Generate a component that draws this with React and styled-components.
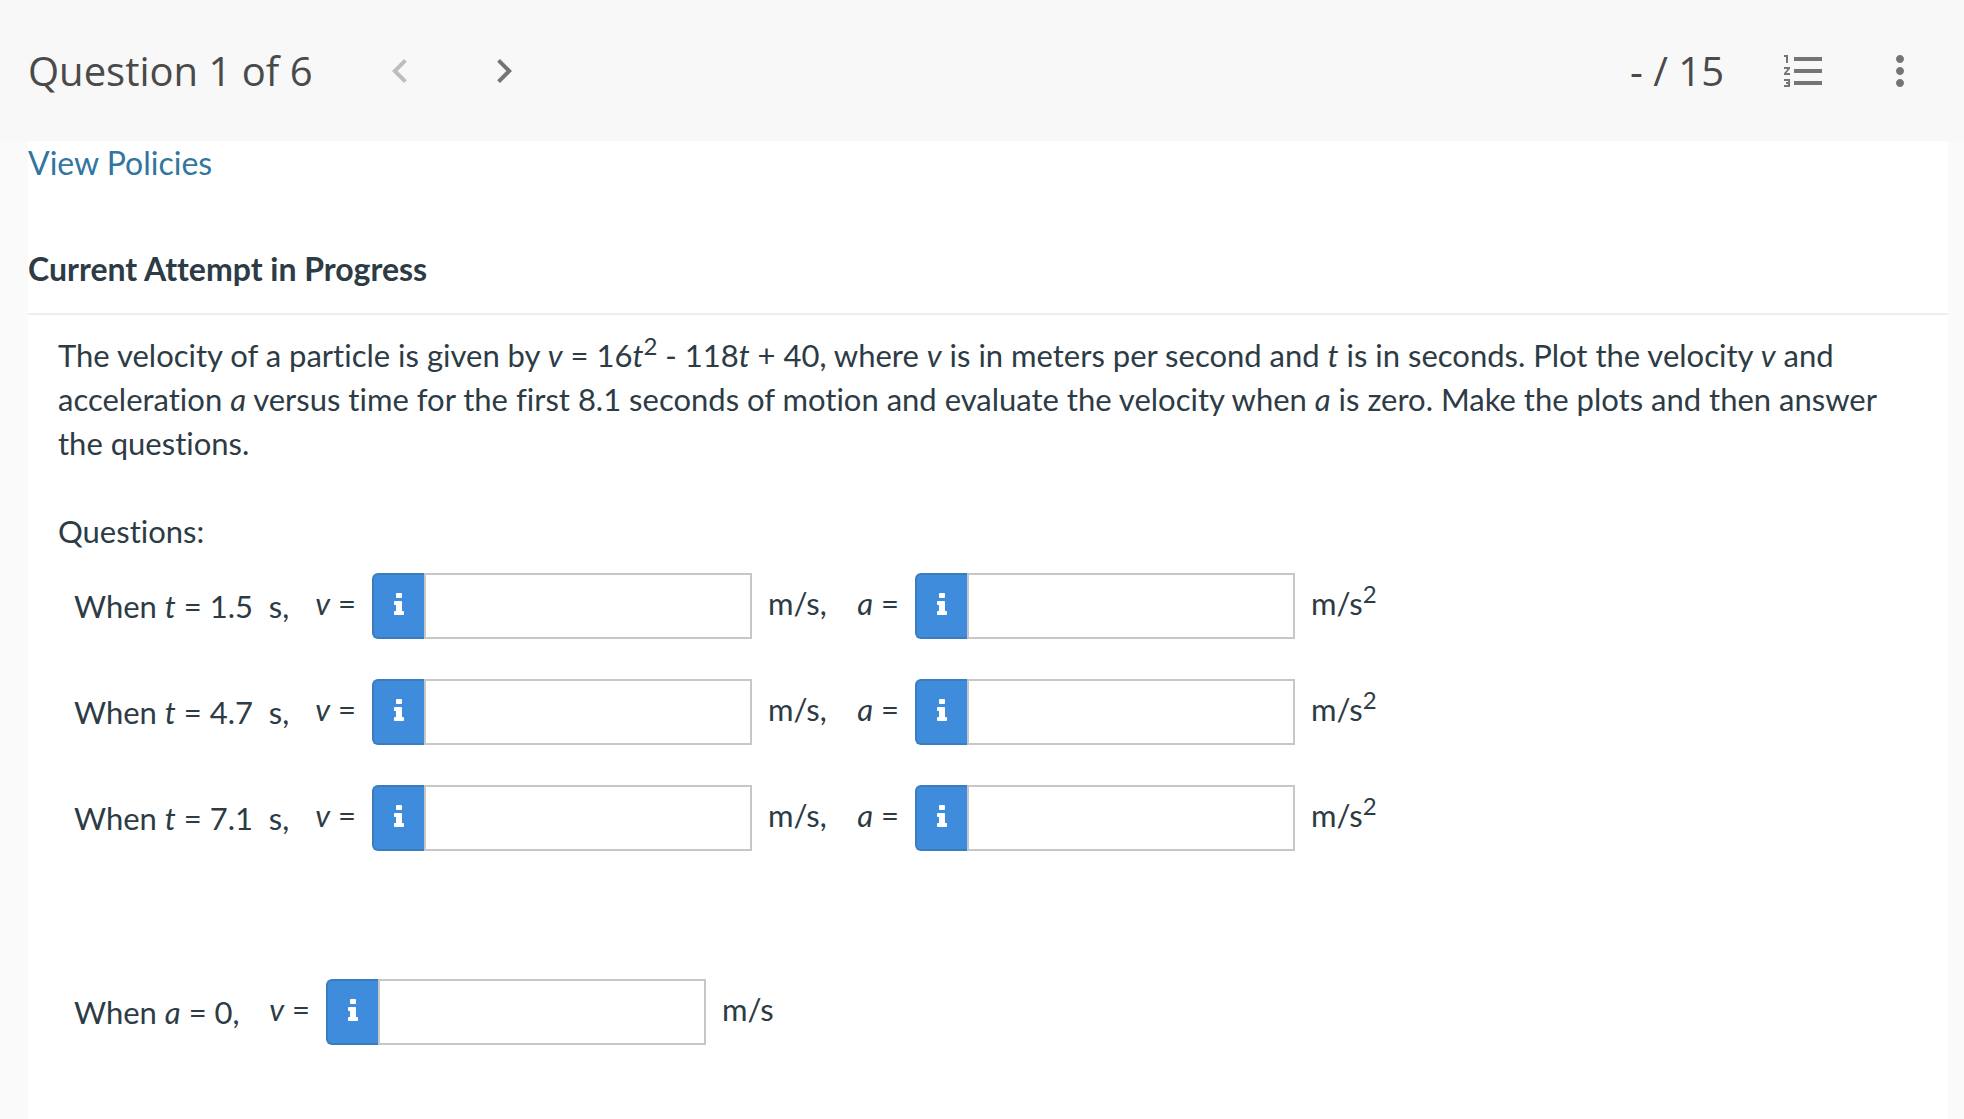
import React, { useState } from "react";
import styled, { createGlobalStyle } from "styled-components";

const GlobalStyle = createGlobalStyle`
  * {
    box-sizing: border-box;
  }
  body {
    margin: 0;
    background-color: #fafafa;
    color: #2d3b45;
    font-family: Lato, "Liberation Sans", sans-serif;
    font-size: 32px;
    line-height: 44px;
    font-variant-ligatures: no-common-ligatures;
  }
`;

const questions = [
  { id: "q1", time: "1.5" },
  { id: "q2", time: "4.7" },
  { id: "q3", time: "7.1" },
];

const Icon = ({ path }) => (
  <svg width="48" height="48" viewBox="0 0 24 24" fill="currentColor">
    <path d={path} />
  </svg>
);

const AnswerField = ({ id, symbol, unit }) => {
  const [value, setValue] = useState("");
  return (
    <Answer>
      <FieldLabel htmlFor={id}>
        <i>{symbol}</i> =
      </FieldLabel>
      <InputGroup>
        <InfoButton type="button" aria-label="Answer information">
          <svg width="10" height="28" viewBox="0 0 640 1792" fill="currentColor">
            <path d="M640 1344v128q0 26-19 45t-45 19h-512q-26 0-45-19t-19-45v-128q0-26 19-45t45-19h64v-384h-64q-26 0-45-19t-19-45v-128q0-26 19-45t45-19h384q26 0 45 19t19 45v576h64q26 0 45 19t19 45zm-128-1152v192q0 26-19 45t-45 19h-256q-26 0-45-19t-19-45v-192q0-26 19-45t45-19h256q26 0 45 19t19 45z" />
          </svg>
        </InfoButton>
        <Input id={id} value={value} onChange={(e) => setValue(e.target.value)} />
      </InputGroup>
      <Unit>{unit}</Unit>
    </Answer>
  );
};

const App = () => {
  return (
    <>
      <GlobalStyle />
      <Header>
        <Title>Question 1 of 6</Title>
        <Nav>
          <IconButton type="button" aria-label="Previous question" disabled>
            <Icon path="M15.41 7.41L14 6l-6 6 6 6 1.41-1.41L10.83 12z" />
          </IconButton>
          <IconButton type="button" aria-label="Next question">
            <Icon path="M10 6L8.59 7.41 13.17 12l-4.58 4.59L10 18l6-6z" />
          </IconButton>
        </Nav>
        <Score>- / 15</Score>
        <IconButton type="button" aria-label="Question list">
          <Icon path="M2 17h2v.5H3v1h1v.5H2v1h3v-4H2v1zm1-9h1V4H2v1h1v3zm-1 3h1.8L2 13.1v.9h3v-1H3.2L5 10.9V10H2v1zm5-6v2h14V5H7zm0 14h14v-2H7v2zm0-6h14v-2H7v2z" />
        </IconButton>
        <IconButton type="button" aria-label="More options">
          <Icon path="M12 8c1.1 0 2-.9 2-2s-.9-2-2-2-2 .9-2 2 .9 2 2 2zm0 2c-1.1 0-2 .9-2 2s.9 2 2 2 2-.9 2-2-.9-2-2-2zm0 6c-1.1 0-2 .9-2 2s.9 2 2 2 2-.9 2-2-.9-2-2-2z" />
        </IconButton>
      </Header>
      <Panel>
        <PolicyLink href="#policies">View Policies</PolicyLink>
        <Attempt>Current Attempt in Progress</Attempt>
        <Content>
          <Paragraph>
            The velocity of a particle is given by <i>v</i> = 16<i>t</i>
            <Sup>2</Sup> - 118<i>t</i> + 40, where <i>v</i> is in meters per
            second and <i>t</i> is in seconds. Plot the velocity <i>v</i> and
            acceleration <i>a</i> versus time for the first 8.1 seconds of
            motion and evaluate the velocity when <i>a</i> is zero. Make the
            plots and then answer the questions.
          </Paragraph>
          <Paragraph>Questions:</Paragraph>
          <Questions>
            {questions.map(({ id, time }) => (
              <Row key={id}>
                <Condition $width={240}>
                  When <i>t</i> = {time}&nbsp; s,
                </Condition>
                <AnswerField id={`${id}-v`} symbol="v" unit="m/s," />
                <AnswerField
                  id={`${id}-a`}
                  symbol="a"
                  unit={
                    <>
                      m/s<Sup>2</Sup>
                    </>
                  }
                />
              </Row>
            ))}
          </Questions>
          <Row>
            <Condition $width={194}>
              When <i>a</i> = 0,
            </Condition>
            <AnswerField id="q4-v" symbol="v" unit="m/s" />
          </Row>
        </Content>
      </Panel>
    </>
  );
};

const Header = styled.header`
  display: flex;
  align-items: center;
  height: 141px;
  padding: 0 16px 0 28px;
  background-color: #f8f8f8;
  color: #4a4a4a;
  font-family: "Open Sans", "Noto Sans", sans-serif;
  font-size: 40px;
`;
const Title = styled.h1`
  margin: 0;
  font-size: 40px;
  font-weight: 400;
`;
const Nav = styled.nav`
  display: flex;
  gap: 8px;
  margin-left: 39px;
`;
const Score = styled.div`
  margin-left: auto;
  padding-right: 32px;
`;
const IconButton = styled.button`
  display: flex;
  padding: 24px;
  border: none;
  background: none;
  color: #757575;
  cursor: pointer;
  &:disabled {
    color: #bdbdbd;
    cursor: default;
  }
`;
const Panel = styled.main`
  margin: 0 16px 0 28px;
  min-height: calc(100vh - 141px);
  background-color: white;
`;
const PolicyLink = styled.a`
  display: block;
  color: #3276a0;
  text-decoration: none;
`;
const Attempt = styled.h2`
  margin: 0;
  padding: 62px 0 22px;
  border-bottom: 2px solid #eee;
  font-size: 32px;
  font-weight: 700;
`;
const Content = styled.div`
  padding: 18px 30px;
  font-size: 31px;
`;
const Paragraph = styled.p`
  margin: 0 0 44px;
`;
const Sup = styled.sup`
  font-size: 24px;
  line-height: 0;
  vertical-align: 12px;
`;
const Questions = styled.div`
  display: flex;
  flex-direction: column;
  gap: 40px;
  margin: -24px 0 128px;
`;
const Row = styled.div`
  display: flex;
  align-items: center;
  padding-left: 16px;
`;
const Condition = styled.span`
  min-width: ${({ $width }) => $width}px;
`;
const Answer = styled.div`
  display: flex;
  align-items: center;
`;
const FieldLabel = styled.label`
  min-width: 58px;
  padding: 0 16px 6px 0;
  text-align: right;
`;
const Unit = styled.span`
  min-width: 105px;
  padding: 0 0 6px 16px;
`;
const InputGroup = styled.div`
  display: flex;
`;
const InfoButton = styled.button`
  display: flex;
  align-items: center;
  justify-content: center;
  width: 52px;
  padding: 0 0 2px;
  border: 2px solid #3b7cbc;
  border-right: none;
  border-radius: 6px 0 0 6px;
  background-color: #3f8bdc;
  color: white;
  cursor: pointer;
`;
const Input = styled.input`
  width: 328px;
  height: 66px;
  padding: 0 12px;
  border: 2px solid #c7c7c7;
  border-radius: 0;
  color: inherit;
  font: inherit;
  &:focus {
    outline: none;
    border-color: #3f8bdc;
  }
`;
export default App;
